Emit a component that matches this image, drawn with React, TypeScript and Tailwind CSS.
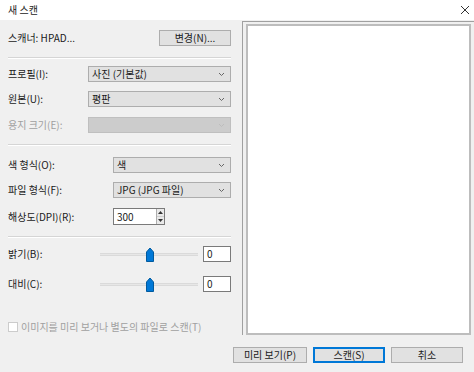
import React from "react";

const font = { fontFamily: '"Noto Sans CJK KR", "Noto Sans", sans-serif' };

function Chevron({ disabled }: { disabled?: boolean }) {
  return (
    <svg width="7" height="5" viewBox="0 0 7 5" className="shrink-0">
      <path d="M1 1 L3.5 3.5 L6 1" fill="none" stroke={disabled ? "#bdbdbd" : "#666"} strokeWidth="1" />
    </svg>
  );
}

function Combo({ text, disabled, w }: { text?: string; disabled?: boolean; w: string }) {
  return (
    <div
      className={`${w} h-[16px] flex items-center justify-between pl-[3px] pr-[5px] border ${
        disabled ? "bg-[#cccccc] border-[#bfbfbf]" : "bg-[#e1e1e1] border-[#adadad]"
      }`}
    >
      <span className="text-[10px] leading-none">{text}</span>
      <Chevron disabled={disabled} />
    </div>
  );
}

function Thumb() {
  return (
    <svg width="8" height="15" viewBox="0 0 8 15" className="absolute left-[46px] top-[-7px]">
      <path d="M0.5 14.5 L0.5 5 L4 1 L7.5 5 L7.5 14.5 Z" fill="#0078d7" stroke="#005a9e" strokeWidth="1" />
    </svg>
  );
}

function SliderRow({ label, mt }: { label: string; mt: string }) {
  return (
    <div className={`${mt} h-[16px] flex items-center`}>
      <span className="text-[10px] leading-none w-[92px]">{label}</span>
      <div className="relative w-[98px] h-[3px] bg-[#e7e7e7] border-y border-[#dadada]">
        <Thumb />
      </div>
      <div className="ml-[5px] w-[28px] h-[16px] bg-white border border-[#7a7a7a] flex items-center pl-[3px] text-[10px] leading-none">
        0
      </div>
    </div>
  );
}

export default function App() {
  return (
    <div className="w-[474px] h-[372px] bg-[#f0f0f0] flex flex-col text-[#1a1a1a] overflow-hidden" style={font}>
      <div className="h-[20px] bg-white flex items-center justify-between pl-[8px] pr-[4px] shrink-0">
        <span className="text-[10px] leading-none">새 스캔</span>
        <svg width="10" height="10" viewBox="0 0 10 10">
          <path d="M1 1 L9 9 M9 1 L1 9" stroke="#333" strokeWidth="1" />
        </svg>
      </div>
      <div className="flex flex-1">
        <div className="w-[242px] pl-[8px] pr-[11px] flex flex-col shrink-0">
          <div className="mt-[10px] h-[16px] flex items-center justify-between">
            <span className="text-[10px] leading-none">스캐너: HPAD...</span>
            <div className="w-[72px] h-[16px] bg-[#e1e1e1] border border-[#adadad] flex items-center justify-center text-[10px] leading-none">
              변경(N)...
            </div>
          </div>
          <div className="mt-[11px] h-[2px] border-t border-[#d5d5d5] border-b border-b-white" />
          <div className="mt-[7px] h-[16px] flex items-center justify-between">
            <span className="text-[10px] leading-none">프로필(I):</span>
            <Combo w="w-[143px]" text="사진 (기본값)" />
          </div>
          <div className="mt-[9px] h-[16px] flex items-center justify-between">
            <span className="text-[10px] leading-none">원본(U):</span>
            <Combo w="w-[143px]" text="평판" />
          </div>
          <div className="mt-[10px] h-[16px] flex items-center justify-between">
            <span className="text-[10px] leading-none text-[#a0a0a0]">용지 크기(E):</span>
            <Combo w="w-[143px]" disabled />
          </div>
          <div className="mt-[11px] h-[2px] border-t border-[#d5d5d5] border-b border-b-white" />
          <div className="mt-[11px] h-[16px] flex items-center justify-between">
            <span className="text-[10px] leading-none">색 형식(O):</span>
            <Combo w="w-[118px]" text="색" />
          </div>
          <div className="mt-[9px] h-[16px] flex items-center justify-between">
            <span className="text-[10px] leading-none">파일 형식(F):</span>
            <Combo w="w-[118px]" text="JPG (JPG 파일)" />
          </div>
          <div className="mt-[10px] h-[17px] flex items-center">
            <span className="text-[10px] leading-none w-[105px]">해상도(DPI)(R):</span>
            <div className="w-[52px] h-[17px] bg-white border border-[#7a7a7a] flex">
              <div className="flex-1 flex items-center pl-[3px] text-[10px] leading-none">300</div>
              <div className="w-[8px] flex flex-col border-l border-[#adadad] bg-[#e9e9e9]">
                <div className="flex-1 flex items-center justify-center border-b border-[#cfcfcf]">
                  <svg width="5" height="3" viewBox="0 0 5 3"><path d="M0 3 L2.5 0 L5 3 Z" fill="#333" /></svg>
                </div>
                <div className="flex-1 flex items-center justify-center">
                  <svg width="5" height="3" viewBox="0 0 5 3"><path d="M0 0 L2.5 3 L5 0 Z" fill="#333" /></svg>
                </div>
              </div>
            </div>
          </div>
          <div className="mt-[11px] h-[2px] border-t border-[#d5d5d5] border-b border-b-white" />
          <SliderRow label="밝기(B):" mt="mt-[8px]" />
          <SliderRow label="대비(C):" mt="mt-[14px]" />
          <div className="mt-[30px] flex items-center">
            <div className="w-[10px] h-[10px] bg-white border border-[#cccccc]" />
            <span className="ml-[3px] text-[10px] leading-none text-[#a0a0a0]">이미지를 미리 보거나 별도의 파일로 스캔(T)</span>
          </div>
        </div>
        <div className="flex-1 flex flex-col">
          <div className="mt-[1px] h-[314px] border-l border-t border-[#a0a0a0] pl-[3px] pt-[2px] pr-[3px]">
            <div className="h-full bg-white border-2 border-[#bdbdbd]" />
          </div>
          <div className="mt-[12px] flex gap-[6px] ml-[-9px]">
            <div className="w-[74px] h-[16px] bg-[#e1e1e1] border border-[#adadad] flex items-center justify-center text-[10px] leading-none">
              미리 보기(P)
            </div>
            <div className="w-[72px] h-[16px] bg-[#e1e1e1] border-2 border-[#0078d7] flex items-center justify-center text-[10px] leading-none">
              스캔(S)
            </div>
            <div className="w-[72px] h-[16px] bg-[#e1e1e1] border border-[#adadad] flex items-center justify-center text-[10px] leading-none">
              취소
            </div>
          </div>
        </div>
      </div>
    </div>
  );
}
